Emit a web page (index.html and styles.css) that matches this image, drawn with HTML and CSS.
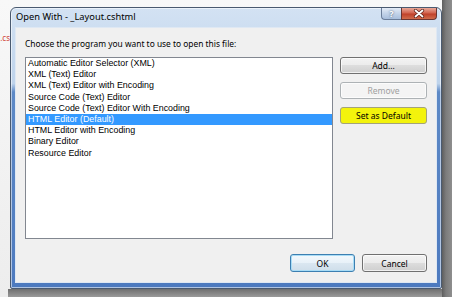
FILE: index.html
```html
<!DOCTYPE html>
<html lang="en">

<head>
  <meta charset="UTF-8" />
  <title>Open With</title>
  <link rel="stylesheet" href="styles.css">
</head>

<body>
  <div class="gutter"><span>.cs</span></div>

  <div class="window">
    <div class="titlebar">
      <span class="title">Open With - _Layout.cshtml</span>
      <div class="caption">
        <span class="cap help">?</span>
        <span class="cap close">
          <svg width="12" height="9" viewBox="0 0 12 9">
            <path d="M2.5 1.5 L9.5 7.5 M9.5 1.5 L2.5 7.5" stroke="#5a1f16" stroke-width="3.2" stroke-linecap="round" />
            <path d="M2.5 1.5 L9.5 7.5 M9.5 1.5 L2.5 7.5" stroke="#fff" stroke-width="1.8" stroke-linecap="round" />
          </svg>
        </span>
      </div>
    </div>

    <div class="client">
      <p class="prompt">Choose the program you want to use to open this file:</p>
      <div class="main">
        <ul class="programs">
          <li>Automatic Editor Selector (XML)</li>
          <li>XML (Text) Editor</li>
          <li>XML (Text) Editor with Encoding</li>
          <li>Source Code (Text) Editor</li>
          <li>Source Code (Text) Editor With Encoding</li>
          <li class="selected">HTML Editor (Default)</li>
          <li>HTML Editor with Encoding</li>
          <li>Binary Editor</li>
          <li>Resource Editor</li>
        </ul>
        <div class="side">
          <button class="btn">Add...</button>
          <button class="btn disabled">Remove</button>
          <button class="btn marked">Set as Default</button>
        </div>
      </div>
      <div class="footer">
        <button class="btn wide default">OK</button>
        <button class="btn wide">Cancel</button>
      </div>
    </div>
  </div>
</body>

</html>
```

FILE: styles.css
```css
* {
  margin: 0;
  padding: 0;
  box-sizing: border-box;
}

body {
  width: 452px;
  height: 297px;
  overflow: hidden;
  display: flex;
  align-items: flex-start;
  font-family: "Segoe UI", "Noto Sans", sans-serif;
  font-size: 8.5px;
  color: #000;
  background:
    linear-gradient(to right, #5e5e5e, #7c7c7c 40%, #8e8e8e) right top / 10px 100% no-repeat,
    linear-gradient(#6f6f6f, #9a9a9a) 8px bottom / 100% 8px no-repeat,
    linear-gradient(#f8f8f8, #ededed);
}

.gutter {
  width: 10px;
  flex-shrink: 0;
  padding-top: 32px;
  overflow: hidden;
  display: flex;
  justify-content: flex-end;
  color: #d0463a;
  font-size: 8px;
}

.gutter span {
  flex-shrink: 0;
}

.window {
  width: 432px;
  height: 282px;
  margin-top: 7px;
  flex-shrink: 0;
  border: 1px solid #4a5a70;
  border-radius: 6px 6px 2px 2px;
  background: linear-gradient(#d3e2f3 0, #bed3eb 27%, #5d89c6 30%, #4d7abf 100%);
  box-shadow: inset 0 0 0 1px rgba(255, 255, 255, 0.55);
  display: flex;
  flex-direction: column;
}

.titlebar {
  height: 20px;
  display: flex;
  justify-content: space-between;
  align-items: flex-start;
  padding: 0 4px 0 5px;
}

.title {
  line-height: 18px;
  font-size: 9.3px;
}

.caption {
  display: flex;
}

.cap {
  height: 12px;
  display: flex;
  align-items: center;
  justify-content: center;
}

.help {
  width: 20px;
  border: 1px solid #6b7d99;
  border-top: 0;
  border-right: 0;
  border-radius: 0 0 0 4px;
  background: linear-gradient(#e4ecf7, #c3d3e9 50%, #a8bedc);
  color: #fff;
  font-weight: bold;
  font-size: 9px;
  text-shadow: 0 0 2px #2d425e;
}

.close {
  width: 36px;
  border: 1px solid #6a3531;
  border-top: 0;
  border-radius: 0 0 4px 0;
  background: linear-gradient(#eaa999, #d2644f 45%, #c0412a 55%, #d06c4c);
}

.client {
  flex: 1;
  margin: 0 5px 6px;
  padding: 10px 9px 0;
  background: #f0f0f0;
  box-shadow: 0 0 0 1px #dfe8f3;
}

.prompt {
  height: 12px;
  line-height: 12px;
  margin-bottom: 7px;
  font-size: 8.4px;
}

.main {
  display: flex;
  gap: 7px;
  height: 182px;
}

.programs {
  width: 308px;
  list-style: none;
  border: 1px solid #828790;
  background: #fff;
  font-family: "Liberation Sans", Arial, sans-serif;
  font-size: 8.9px;
}

.programs li {
  height: 11.2px;
  line-height: 11.2px;
  padding-left: 2px;
  white-space: nowrap;
}

.programs .selected {
  background: #3399ff;
  color: #fff;
}

.side {
  width: 87px;
  display: flex;
  flex-direction: column;
  gap: 8px;
}

.btn {
  height: 17px;
  border: 1px solid #707070;
  border-radius: 3px;
  background: linear-gradient(#f3f3f3 0, #ebebeb 50%, #dddddd 50%, #cfcfcf);
  box-shadow: inset 0 0 0 1px rgba(255, 255, 255, 0.7);
  font: inherit;
  color: #000;
}

.btn.disabled {
  border-color: #adb2b5;
  background: #f4f4f4;
  color: #a0a0a0;
}

.btn.marked {
  border-color: #a3a37a;
  background: #f3f30c;
  box-shadow: none;
}

.footer {
  display: flex;
  justify-content: flex-end;
  gap: 7px;
  margin-top: 15px;
}

.btn.wide {
  width: 65px;
  height: 18px;
}

.btn.default {
  border-color: #3c7fb1;
  box-shadow: inset 0 0 0 1px #a8dcf6;
  background: linear-gradient(#f2f8fc 0, #e8f1f8 50%, #dbe7f1 50%, #cfdeea);
}
```
